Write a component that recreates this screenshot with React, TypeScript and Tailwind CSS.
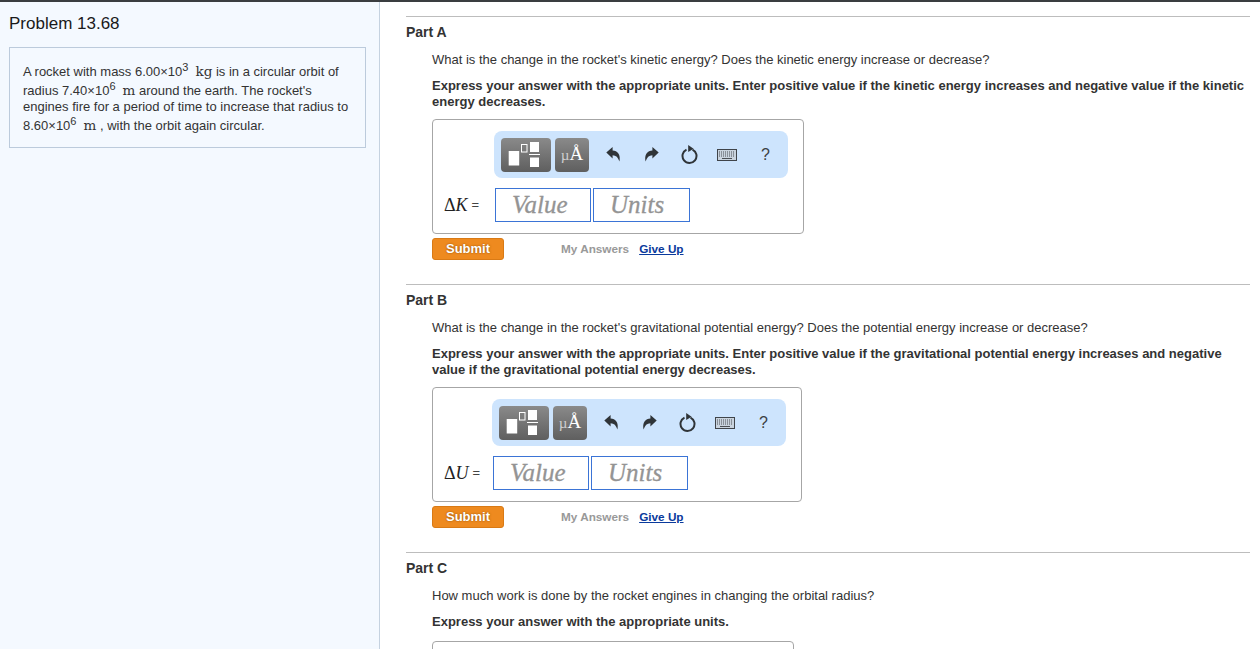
import React from 'react'

const sans = { fontFamily: '"Liberation Sans", Arial, sans-serif' }
const serif = { fontFamily: '"Liberation Serif", serif' }
const mathUnit = { fontFamily: '"DejaVu Serif", serif' }

const Icons = {
  Undo: () => (
    <svg width="15" height="15" viewBox="0 0 15 15" className="text-[#2f3438]">
      <path d="M0.3 5.6 L6.6 0 V3.4 C11.5 3.6 15 7.5 13.4 14.6 C12.2 10.4 10 8.2 6.6 8.2 V11.4 Z" fill="currentColor" />
    </svg>
  ),
  Redo: () => (
    <svg width="15" height="15" viewBox="0 0 15 15" className="text-[#2f3438]">
      <path d="M14.7 5.6 L8.4 0 V3.4 C3.5 3.6 0 7.5 1.6 14.6 C2.8 10.4 5 8.2 8.4 8.2 V11.4 Z" fill="currentColor" />
    </svg>
  ),
  Reset: () => (
    <svg width="17" height="19" viewBox="0 0 17 19" className="text-[#2f3438]">
      <path d="M5.5 4.6 A7 7 0 1 0 11.5 4.6" fill="none" stroke="currentColor" strokeWidth="2" />
      <path d="M7.2 0 L12.6 3.8 L7.2 7 Z" fill="currentColor" />
    </svg>
  ),
  Keyboard: () => (
    <svg width="20" height="12" viewBox="0 0 20 12">
      <rect x="0.5" y="0.5" width="19" height="11" fill="#c9d3de" stroke="#3f444a" />
      <path d="M2 3 H18 M2 5 H18 M2 7 H18" stroke="#4a4f55" strokeDasharray="1 1" />
      <path d="M5 9.5 H15" stroke="#4a4f55" />
    </svg>
  ),
  Template: () => (
    <svg width="32" height="25" viewBox="0 0 32 25">
      <rect x="0.7" y="9" width="10.5" height="14.5" fill="#fff" />
      <rect x="13.5" y="2.5" width="5.5" height="7.5" fill="none" stroke="#fff" />
      <rect x="22" y="0" width="9" height="10" fill="#fff" />
      <rect x="21" y="12" width="11" height="1" fill="#fff" />
      <rect x="22" y="15.5" width="9" height="9.5" fill="#fff" />
    </svg>
  ),
}

const ToolBar: React.FC = () => (
  <div className="ml-[61px] w-[294px] h-[47px] rounded-lg bg-[#cde4fd] flex items-center pl-[7px]">
    <div className="w-[50px] h-[34px] pr-[5px] rounded bg-gradient-to-b from-[#8a8a8a] to-[#5f5f5f] flex items-center justify-center">
      <Icons.Template />
    </div>
    <div
      className="ml-[4px] w-[34px] h-[34px] rounded bg-gradient-to-b from-[#8a8a8a] to-[#5f5f5f] flex items-center justify-center text-white text-[19px]"
      style={serif}
    >
      <span className="text-[#cfcfcf] text-[15px] mt-[2px]">µ</span>Å
    </div>
    <div className="ml-[17px] w-[15px] flex justify-center"><Icons.Undo /></div>
    <div className="ml-[23px] w-[15px] flex justify-center"><Icons.Redo /></div>
    <div className="ml-[22px] w-[17px] flex justify-center"><Icons.Reset /></div>
    <div className="ml-[19px] w-[20px] flex justify-center"><Icons.Keyboard /></div>
    <div className="ml-[24px] text-[16px] text-[#3c4043]" style={sans}>?</div>
  </div>
)

const Field: React.FC<{ label: string; width: string }> = ({ label, width }) => (
  <div
    className={`${width} h-[34px] border border-[#3b74d6] pl-[16px] flex items-center text-[25px] text-[#949494] bg-white [-webkit-text-stroke:0.3px_#949494]`}
    style={serif}
  >
    <i>{label}</i>
  </div>
)

const Actions: React.FC = () => (
  <div className="mt-[4px] flex items-center h-[22px] text-[11.75px] font-bold" style={sans}>
    <div className="w-[72px] h-[22px] rounded-[3px] bg-[#ee8a1f] border border-[#d97a15] text-white text-[13px] flex items-center justify-center [text-shadow:0_0_2px_#8a4a00]">
      Submit
    </div>
    <span className="ml-[57px] text-[#999999]">My Answers</span>
    <span className="ml-[10px] text-[#0a3a9c] underline">Give Up</span>
  </div>
)

const AnswerBox: React.FC<{ variable: string; width: string; indent: string; fieldGap: string }> = ({ variable, width, indent, fieldGap }) => (
  <>
    <div className={`${width} h-[115px] border border-[#a6a6a6] rounded pt-[11px] bg-white`}>
      <div className={indent}>
        <ToolBar />
      </div>
      <div className="mt-[10px] flex items-center">
        <div className={`${fieldGap} pl-[11px] flex items-center text-[18px] text-[#222]`} style={serif}>
          Δ<i>{variable}</i>
          <span className="ml-[4px] text-[13px] text-[#444]" style={sans}>=</span>
        </div>
        <Field label="Value" width="w-[96px]" />
        <div className="w-[2px]" />
        <Field label="Units" width="w-[97px]" />
      </div>
    </div>
    <Actions />
  </>
)

export default function App() {
  return (
    <div className="w-[1260px] h-[649px] overflow-hidden bg-white flex flex-col" style={sans}>
      <div className="h-[2px] bg-[#3a3d40] shrink-0" />
      <div className="flex flex-1 min-h-0">
        <aside className="w-[380px] shrink-0 bg-[#f4f9ff] border-r border-[#c5d2e0] pl-[9px] pr-[13px]">
          <h1 className="mt-[12px] text-[17px] leading-[20px] text-[#1a1a1a]">Problem 13.68</h1>
          <div className="mt-[13px] h-[101px] border border-[#bccbdc] pl-[13px] pt-[14px] text-[13px] text-[#333]">
            <p className="h-[19px] leading-[18px] whitespace-nowrap">
              A rocket with mass 6.00×10<sup className="text-[11px]">3</sup>
              <span className="ml-[7px] text-[13.5px]" style={mathUnit}>kg</span> is in a circular orbit of
            </p>
            <p className="h-[17px] leading-[18px] whitespace-nowrap">
              radius 7.40×10<sup className="text-[11px]">6</sup>
              <span className="ml-[7px] text-[13.5px]" style={mathUnit}>m</span> around the earth. The rocket's
            </p>
            <p className="h-[18px] leading-[18px] whitespace-nowrap">engines fire for a period of time to increase that radius to</p>
            <p className="h-[18px] leading-[18px] whitespace-nowrap">
              8.60×10<sup className="text-[11px]">6</sup>
              <span className="ml-[7px] text-[13.5px]" style={mathUnit}>m</span> , with the orbit again circular.
            </p>
          </div>
        </aside>
        <main className="flex-1 pl-[26px] pr-[10px] text-[#333] overflow-hidden">
          <section className="mt-[14px] border-t border-[#bdbdbd] h-[268px]">
            <h2 className="mt-[7px] text-[14px] leading-[17px] font-bold text-[#333]">Part A</h2>
            <div className="pl-[26px]">
              <p className="mt-[10px] text-[13px] leading-[17px]">
                What is the change in the rocket's kinetic energy? Does the kinetic energy increase or decrease?
              </p>
              <p className="mt-[10px] text-[13px] leading-[16px] font-bold">
                Express your answer with the appropriate units. Enter positive value if the kinetic energy increases and negative value if the kinetic energy decreases.
              </p>
              <div className="mt-[9px]">
                <AnswerBox variable="K" width="w-[372px]" indent="" fieldGap="w-[62px]" />
              </div>
            </div>
          </section>
          <section className="border-t border-[#bdbdbd] h-[268px]">
            <h2 className="mt-[7px] text-[14px] leading-[17px] font-bold text-[#333]">Part B</h2>
            <div className="pl-[26px]">
              <p className="mt-[10px] text-[13px] leading-[17px]">
                What is the change in the rocket's gravitational potential energy? Does the potential energy increase or decrease?
              </p>
              <p className="mt-[10px] text-[13px] leading-[16px] font-bold">
                Express your answer with the appropriate units. Enter positive value if the gravitational potential energy increases and negative value if the gravitational potential energy decreases.
              </p>
              <div className="mt-[9px]">
                <AnswerBox variable="U" width="w-[370px]" indent="-ml-[2px]" fieldGap="w-[60px]" />
              </div>
            </div>
          </section>
          <section className="border-t border-[#bdbdbd]">
            <h2 className="mt-[7px] text-[14px] leading-[17px] font-bold text-[#333]">Part C</h2>
            <div className="pl-[26px]">
              <p className="mt-[10px] text-[13px] leading-[17px]">
                How much work is done by the rocket engines in changing the orbital radius?
              </p>
              <p className="mt-[10px] text-[13px] leading-[16px] font-bold">
                Express your answer with the appropriate units.
              </p>
              <div className="mt-[11px] w-[362px] h-[40px] border border-[#a6a6a6] rounded" />
            </div>
          </section>
        </main>
      </div>
    </div>
  )
}
